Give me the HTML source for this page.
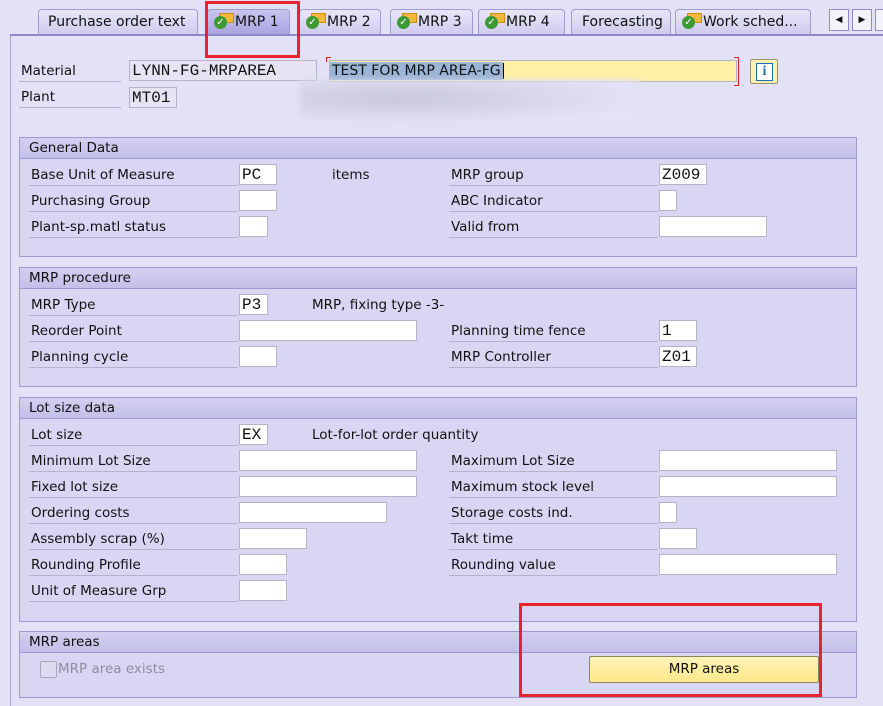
<!DOCTYPE html><html><head><style>
body{margin:0;width:883px;height:706px;overflow:hidden;background:#e3e1f5;font-family:Tahoma,"DejaVu Sans","Liberation Sans",sans-serif;font-size:13.5px;color:#111;position:relative}
.a{position:absolute}
.tab{position:absolute;top:9px;height:25px;background:linear-gradient(#e8e6f8,#cfcbee);border:1px solid #9f9ad0;border-bottom:none;border-radius:4px 4px 0 0;line-height:25px;font-size:14px;padding-left:6px;box-sizing:border-box}
.lbl{position:absolute;height:20px;line-height:20px;border-bottom:1px solid #b4b2c8;width:207px}
.f{position:absolute;height:21px;background:#fff;border:1px solid #b5b3c5;box-sizing:border-box;font-family:"Liberation Mono",monospace;font-size:16px;line-height:20px;padding-left:2px}
.g{position:absolute;left:19px;width:838px;border:1px solid #9d98d2;background:#d9d6f3;box-sizing:border-box}
.gh{height:20px;line-height:20px;padding-left:9px;background:linear-gradient(#d3d0f0,#c3bfe8);border-bottom:1px solid #9d98d2;font-size:13.5px}
.ic{display:inline-block;width:18px;height:16px;vertical-align:-3px;margin-right:3px;position:relative}
.ic:before{content:"";position:absolute;left:5px;top:0;width:13px;height:8px;background:#f4b83a;border:1px solid #d08a10}
.ic:after{content:"✓";position:absolute;left:0;top:3px;width:13px;height:13px;border-radius:50%;background:#3e9a35;color:#fff;font-size:10px;line-height:13px;text-align:center}
.red{position:absolute;border:3px solid #e8232b}
</style></head><body>
<div class="a" style="left:10px;top:34px;width:873px;height:2px;background:#8f89c9"></div>
<div class="a" style="left:10px;top:36px;width:1px;height:670px;background:#aaa6d4"></div>
<div class="tab" style="left:38px;width:160px;padding-left:9px">Purchase order text</div>
<div class="tab" style="left:207px;width:83px;background:linear-gradient(#c9c5ef,#aaa4e0)"><span class="ic"></span>MRP 1</div>
<div class="tab" style="left:299px;width:82px"><span class="ic"></span>MRP 2</div>
<div class="tab" style="left:390px;width:83px"><span class="ic"></span>MRP 3</div>
<div class="tab" style="left:478px;width:87px"><span class="ic"></span>MRP 4</div>
<div class="tab" style="left:571px;width:100px;padding-left:10px">Forecasting</div>
<div class="tab" style="left:675px;width:136px"><span class="ic"></span>Work sched...</div>
<div class="a" style="left:829px;top:9px;width:18px;height:20px;border:1px solid #8f89c9;background:#f4f3fb;font-size:9px;text-align:center;line-height:20px">◀</div>
<div class="a" style="left:852px;top:9px;width:18px;height:20px;border:1px solid #8f89c9;background:#f4f3fb;font-size:9px;text-align:center;line-height:20px">▶</div>
<div class="a" style="left:875px;top:9px;width:10px;height:20px;border:1px solid #8f89c9;background:#f4f3fb"></div>

<div class="lbl" style="left:19px;top:61px;width:100px;padding-left:2px">Material</div>
<div class="f" style="left:129px;top:60px;width:188px;height:21px;background:#e6e4f2">LYNN-FG-MRPAREA</div>
<div class="lbl" style="left:19px;top:87px;width:100px;padding-left:2px">Plant</div>
<div class="f" style="left:129px;top:87px;width:48px;background:#e6e4f2">MT01</div>
<div class="f" style="left:329px;top:60px;width:408px;height:22px;background:#fef0a4;font-family:Tahoma,'DejaVu Sans',sans-serif;font-size:14px;padding-left:0"><span style="background:#9bb5d6;padding:1px 2px">TEST FOR MRP AREA-FG</span><span style="border-left:1px solid #000"></span></div>
<div class="a" style="left:734px;top:57px;width:4px;height:27px;border:1px solid #d22;border-left:none"></div>
<div class="a" style="left:326px;top:57px;width:4px;height:4px;border-top:1px solid #d22;border-left:1px solid #d22"></div>
<div class="a" style="left:750px;top:59px;width:26px;height:23px;background:#fdf0b0;border:1px solid #9b9470;border-radius:2px"><div style="margin:3px 5px;width:15px;height:16px;border:1px solid #1d6fb5;background:#fff;color:#1d6fb5;font:bold 14px 'Liberation Serif',serif;text-align:center;line-height:16px">i</div></div>
<div class="a" style="left:300px;top:80px;width:340px;height:45px;background:radial-gradient(ellipse at 30% 40%,#c9c7d9,#e3e1f5 70%);filter:blur(3px)"></div>

<div class="g" style="top:137px;height:120px"><div class="gh">General Data</div></div>
<div class="g" style="top:267px;height:120px"><div class="gh">MRP procedure</div></div>
<div class="g" style="top:397px;height:225px"><div class="gh">Lot size data</div></div>
<div class="g" style="top:631px;height:67px"><div class="gh">MRP areas</div></div>

<!-- General -->
<div class="lbl" style="left:29px;top:165px;padding-left:2px">Base Unit of Measure</div><div class="f" style="left:239px;top:164px;width:38px">PC</div>
<div class="a" style="left:332px;top:165px;line-height:20px">items</div>
<div class="lbl" style="left:29px;top:191px;padding-left:2px">Purchasing Group</div><div class="f" style="left:239px;top:190px;width:38px"></div>
<div class="lbl" style="left:29px;top:217px;padding-left:2px">Plant-sp.matl status</div><div class="f" style="left:239px;top:216px;width:29px"></div>
<div class="lbl" style="left:449px;top:165px;padding-left:2px">MRP group</div><div class="f" style="left:659px;top:164px;width:48px">Z009</div>
<div class="lbl" style="left:449px;top:191px;padding-left:2px">ABC Indicator</div><div class="f" style="left:659px;top:190px;width:18px"></div>
<div class="lbl" style="left:449px;top:217px;padding-left:2px">Valid from</div><div class="f" style="left:659px;top:216px;width:108px"></div>
<!-- Proc -->
<div class="lbl" style="left:29px;top:295px;padding-left:2px">MRP Type</div><div class="f" style="left:239px;top:294px;width:29px">P3</div>
<div class="a" style="left:312px;top:295px;line-height:20px">MRP, fixing type -3-</div>
<div class="lbl" style="left:29px;top:321px;padding-left:2px">Reorder Point</div><div class="f" style="left:239px;top:320px;width:178px"></div>
<div class="lbl" style="left:29px;top:347px;padding-left:2px">Planning cycle</div><div class="f" style="left:239px;top:346px;width:38px"></div>
<div class="lbl" style="left:449px;top:321px;padding-left:2px">Planning time fence</div><div class="f" style="left:659px;top:320px;width:38px">1</div>
<div class="lbl" style="left:449px;top:347px;padding-left:2px">MRP Controller</div><div class="f" style="left:659px;top:346px;width:38px">Z01</div>
<!-- Lot -->
<div class="lbl" style="left:29px;top:425px;padding-left:2px">Lot size</div><div class="f" style="left:239px;top:424px;width:29px">EX</div>
<div class="a" style="left:312px;top:425px;line-height:20px">Lot-for-lot order quantity</div>
<div class="lbl" style="left:29px;top:451px;padding-left:2px">Minimum Lot Size</div><div class="f" style="left:239px;top:450px;width:178px"></div>
<div class="lbl" style="left:29px;top:477px;padding-left:2px">Fixed lot size</div><div class="f" style="left:239px;top:476px;width:178px"></div>
<div class="lbl" style="left:29px;top:503px;padding-left:2px">Ordering costs</div><div class="f" style="left:239px;top:502px;width:148px"></div>
<div class="lbl" style="left:29px;top:529px;padding-left:2px">Assembly scrap (%)</div><div class="f" style="left:239px;top:528px;width:68px"></div>
<div class="lbl" style="left:29px;top:555px;padding-left:2px">Rounding Profile</div><div class="f" style="left:239px;top:554px;width:48px"></div>
<div class="lbl" style="left:29px;top:581px;padding-left:2px">Unit of Measure Grp</div><div class="f" style="left:239px;top:580px;width:48px"></div>
<div class="lbl" style="left:449px;top:451px;padding-left:2px">Maximum Lot Size</div><div class="f" style="left:659px;top:450px;width:178px"></div>
<div class="lbl" style="left:449px;top:477px;padding-left:2px">Maximum stock level</div><div class="f" style="left:659px;top:476px;width:178px"></div>
<div class="lbl" style="left:449px;top:503px;padding-left:2px">Storage costs ind.</div><div class="f" style="left:659px;top:502px;width:18px"></div>
<div class="lbl" style="left:449px;top:529px;padding-left:2px">Takt time</div><div class="f" style="left:659px;top:528px;width:38px"></div>
<div class="lbl" style="left:449px;top:555px;padding-left:2px">Rounding value</div><div class="f" style="left:659px;top:554px;width:178px"></div>
<!-- MRP areas -->
<div class="a" style="left:40px;top:661px;width:15px;height:15px;border:1px solid #a9a7b8;border-radius:2px;background:#dcdaf0"></div>
<div class="a" style="left:58px;top:660px;line-height:18px;color:#8e8ca0">MRP area exists</div>
<div class="a" style="left:589px;top:656px;width:228px;height:25px;background:linear-gradient(#fff4b8,#fde88a);border:1px solid #8c8660;border-radius:2px;text-align:center;line-height:25px">MRP areas</div>

<div class="red" style="left:205px;top:1px;width:89px;height:51px"></div>
<div class="red" style="left:519px;top:603px;width:297px;height:88px"></div>
</body></html>
